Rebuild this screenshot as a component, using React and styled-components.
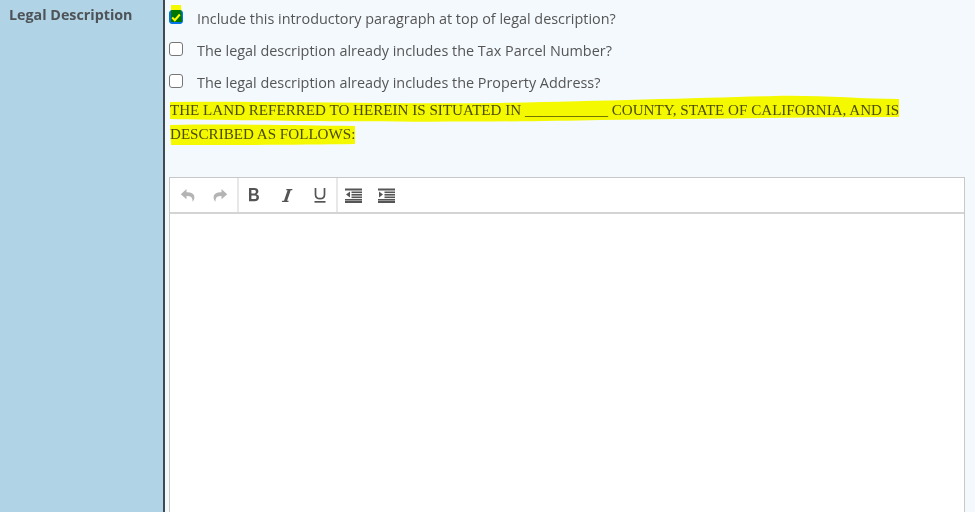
import React from "react";
import styled, { createGlobalStyle } from "styled-components";

const GlobalStyle = createGlobalStyle`
  html, body {
    margin: 0;
    padding: 0;
    height: 100%;
    overflow: hidden;
  }
  #root {
    height: 100%;
  }
`;

const Page = styled.div`
  display: flex;
  height: 512px;
  width: 975px;
  font-family: "Open Sans", sans-serif;
  color: #555;
  background: #f4f9fe;
`;

const Sidebar = styled.div`
  width: 163px;
  flex: none;
  box-sizing: border-box;
  padding: 5px 9px;
  background: #b0d3e6;
  font-size: 14.3px;
  line-height: 20px;
  font-weight: 700;
  color: #4d5356;
`;

const Content = styled.div`
  position: relative;
  flex: 1;
  display: flex;
  flex-direction: column;
  border-left: 2px solid #3f4a52;
  padding: 8px 10px 0 4px;
  min-width: 0;
`;

const OptionList = styled.div`
  display: flex;
  flex-direction: column;
  gap: 12px;
`;

const Option = styled.label`
  display: flex;
  align-items: center;
  gap: 14px;
  height: 20px;
  font-size: 14.4px;
  color: #555;
`;

const Box = styled.span`
  width: 14px;
  height: 14px;
  flex: none;
  box-sizing: border-box;
  border-radius: 3px;
  margin-top: -2px;
  display: flex;
  align-items: center;
  justify-content: center;
  border: 1.5px solid ${(p) => (p.$checked ? "#0075e8" : "#767676")};
  background: ${(p) => (p.$checked ? "#0075e8" : "#fff")};
`;

const Disclaimer = styled.p`
  margin: 6px 0 0;
  padding-left: 1px;
  width: 745px;
  font-family: "Liberation Serif", serif;
  font-size: 15.1px;
  line-height: 24px;
  color: #4c4c20;
`;

const Highlight = styled.svg`
  position: absolute;
  left: 0;
  top: 0;
  pointer-events: none;
  mix-blend-mode: multiply;
`;

const Editor = styled.div`
  margin-top: 31px;
  flex: 1;
  display: flex;
  flex-direction: column;
  background: #fff;
  border: 1px solid #c8c8c8;
  border-bottom: 0;
`;

const Toolbar = styled.div`
  display: flex;
  height: 34px;
  flex: none;
  border-bottom: 2px solid #d4d4d4;
`;

const ToolGroup = styled.div`
  display: flex;
  align-items: center;
  gap: 12px;
  padding: 0 ${(p) => p.$right || 6}px 0 ${(p) => p.$left}px;
  border-right: ${(p) => (p.$divider ? "2px solid #e8e8e8" : "0")};
`;

const ToolButton = styled.span`
  width: 21px;
  height: 21px;
  display: flex;
  align-items: center;
  justify-content: center;
  color: ${(p) => (p.$disabled ? "#b4b4b4" : "#555")};
`;

const Body = styled.div`
  flex: 1;
`;

const Undo = ({ flip }) => (
  <svg width="15" height="15" viewBox="0 0 15 15" style={flip ? { transform: "scaleX(-1)" } : undefined}>
    <path fill="currentColor" d="M6.500 1 .8 6.200l5.700 5V8c3-.2 4.600.6 5.500 2.200.4.800.6 2 .6 3.600 1.500-1.800 2-3.600 1.700-5.400C14 5.800 11 4.300 6.500 4.300z" />
  </svg>
);

const Bold = () => (
  <svg width="12" height="16" viewBox="0 0 12 16">
    <path fill="currentColor" fillRule="evenodd" d="M1 1h5.200c2.700 0 4.200 1.200 4.200 3.300 0 1.400-.8 2.400-2 2.900 1.600.4 2.600 1.500 2.600 3.300 0 2.400-1.700 3.800-4.600 3.800H1zm2.400 2v3.500h2.500c1.300 0 2-.6 2-1.800S7.200 3 5.900 3zm0 5.400v3.700h2.900c1.400 0 2.200-.7 2.200-1.900S7.700 8.400 6.300 8.400z" />
  </svg>
);

const Italic = () => (
  <svg width="12" height="15" viewBox="0 0 12 15">
    <path fill="currentColor" d="M5.500 1h6l-.3 1.300H9.700L6.100 12.700h1.600l-.4 1.300H.8l.4-1.300h1.800L6.600 2.300H5.100z" />
  </svg>
);

const Underline = () => (
  <svg width="12" height="16" viewBox="0 0 12 16">
    <path fill="none" stroke="currentColor" strokeWidth="1.700" d="M1.500 1v6.500c0 2.800 1.500 4.200 4.500 4.200s4.500-1.400 4.500-4.200V1" />
    <rect x="0.500" y="14" width="11" height="1.700" fill="currentColor" />
  </svg>
);

const Indent = ({ out }) => (
  <svg width="17" height="15" viewBox="0 0 17 15">
    <g fill="currentColor">
      <rect x="0" y="0.500" width="17" height="2" />
      <rect x="6.500" y="3.500" width="10.500" height="1.600" />
      <rect x="6.500" y="6" width="10.500" height="1.600" />
      <rect x="6.500" y="8.500" width="10.500" height="1.600" />
      <rect x="0" y="11" width="17" height="1.600" />
      <rect x="0" y="13" width="17" height="2" />
      <path d={out ? "M5 3.500v6L1 6.500z" : "M1 3.500v6l4-3z"} />
    </g>
  </svg>
);

const options = [
  { label: "Include this introductory paragraph at top of legal description?", checked: true },
  { label: "The legal description already includes the Tax Parcel Number?" },
  { label: "The legal description already includes the Property Address?" },
];

export default function App() {
  return (
    <Page>
      <GlobalStyle />
      <Sidebar>Legal Description</Sidebar>
      <Content>
        <OptionList>
          {options.map((o) => (
            <Option key={o.label}>
              <Box $checked={o.checked}>
                {o.checked && (
                  <svg width="10" height="9" viewBox="0 0 10 9">
                    <path d="M1.200 4.500 3.800 7.200 8.800 1.500" fill="none" stroke="#fff" strokeWidth="2" />
                  </svg>
                )}
              </Box>
              {o.label}
            </Option>
          ))}
        </OptionList>
        <Disclaimer>
          THE LAND REFERRED TO HEREIN IS SITUATED IN ___________ COUNTY, STATE OF CALIFORNIA, AND IS
          DESCRIBED AS FOLLOWS:
        </Disclaimer>
        <Editor>
          <Toolbar>
            <ToolGroup $divider $left={7} $right={5.5}>
              <ToolButton $disabled><Undo /></ToolButton>
              <ToolButton $disabled><Undo flip /></ToolButton>
            </ToolGroup>
            <ToolGroup $divider $left={5} $right={5.5}>
              <ToolButton><Bold /></ToolButton>
              <ToolButton><Italic /></ToolButton>
              <ToolButton><Underline /></ToolButton>
            </ToolGroup>
            <ToolGroup $left={5}>
              <ToolButton><Indent out /></ToolButton>
              <ToolButton><Indent /></ToolButton>
            </ToolGroup>
          </Toolbar>
          <Body />
        </Editor>
        <Highlight width="810" height="150" viewBox="165 0 810 150">
          <path
            fill="#ffff00"
            d="M170 102 C 280 101 400 104 500 103 C 600 101 700 98 775 96 C 820 95 860 99 899 99 L 899 117 C 800 117 700 119 600 120 C 520 122 400 122 300 121 C 250 120 200 120 170 119 Z"
          />
          <path fill="#ffff00" d="M170 125 C 230 124 300 125 355 126 L 355 144 C 300 145 230 145 171 145 Z" />
          <path fill="#ffff00" d="M171 5 L 181 5 L 182 22 L 171 22 Z" />
        </Highlight>
      </Content>
    </Page>
  );
}
